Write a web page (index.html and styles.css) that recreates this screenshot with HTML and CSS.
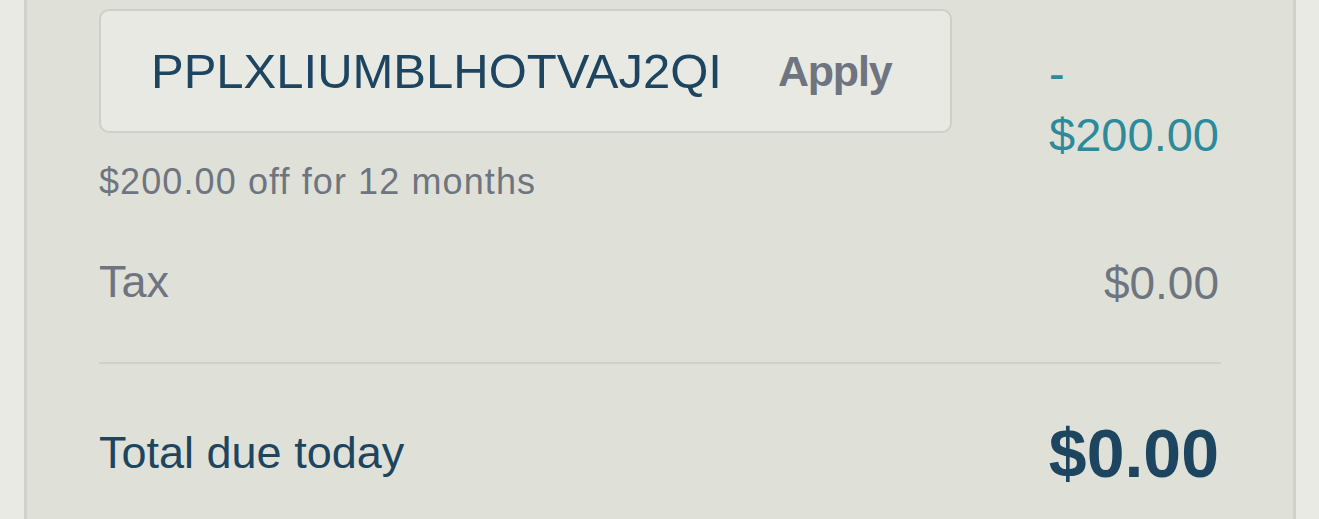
FILE: index.html
```html
<!DOCTYPE html>
<html lang="en">

<head>
    <meta charset="UTF-8">
    <meta name="viewport" content="width=device-width, initial-scale=1.0">
    <title>Order summary</title>
    <link rel="stylesheet" href="styles.css">
</head>

<body>
    <div class="summary">
        <!-- promo code row -->
        <div class="row promo-row">
            <div class="promo">
                <div class="promo-box">
                    <span class="promo-code">PPLXLIUMBLHOTVAJ2QI</span>
                    <button class="apply">Apply</button>
                </div>
                <div class="promo-note">$200.00 off for 12 months</div>
            </div>
            <div class="discount">-<br>$200.00</div>
        </div>

        <div class="row tax-row">
            <span>Tax</span>
            <span class="tax-amount">$0.00</span>
        </div>

        <div class="row total-row">
            <span>Total due today</span>
            <span class="total-amount">$0.00</span>
        </div>
    </div>
</body>

</html>
```

FILE: styles.css
```css
body {
    margin: 0;
    background-color: #e9eae3;
    font-family: "Liberation Sans", Arial, sans-serif;
}

.summary {
    margin-left: 24px;
    width: 1272px;
    height: 519px;
    box-sizing: border-box;
    border-left: 3px solid #cfd1ca;
    border-right: 3px solid #cfd1ca;
    background-color: #dfe1d9;
    padding: 9px 72px 0 72px;
}

.row {
    display: flex;
    justify-content: space-between;
}

.promo-row {
    align-items: flex-start;
}

.promo-box {
    width: 853px;
    height: 124px;
    box-sizing: border-box;
    border: 2px solid #cdd0c8;
    border-radius: 10px;
    background-color: #e8e9e2;
    display: flex;
    align-items: center;
    padding: 0 0 0 50px;
}

.promo-code {
    font-size: 49px;
    color: #1d4560;
}

.apply {
    margin-left: 56px;
    border: none;
    background: none;
    padding: 0;
    font-family: inherit;
    font-size: 43px;
    font-weight: 700;
    letter-spacing: -1.2px;
    color: #6e7580;
}

.promo-note {
    margin-top: 28px;
    font-size: 36px;
    letter-spacing: 1.1px;
    color: #6e7580;
}

.discount {
    margin-top: 34px;
    margin-right: 2px;
    font-size: 47px;
    line-height: 61px;
    color: #2c8a9a;
}

.tax-row {
    margin-top: 53px;
    padding-bottom: 52px;
    border-bottom: 2px solid #cfd1ca;
    font-size: 45px;
    color: #6e7580;
}

.tax-amount {
    font-size: 46px;
    margin-right: 2px;
}

.total-row {
    margin-top: 50px;
    align-items: center;
    font-size: 45px;
    color: #1d4560;
}

.total-amount {
    margin-right: 2px;
    font-size: 68px;
    font-weight: 700;
}
```
